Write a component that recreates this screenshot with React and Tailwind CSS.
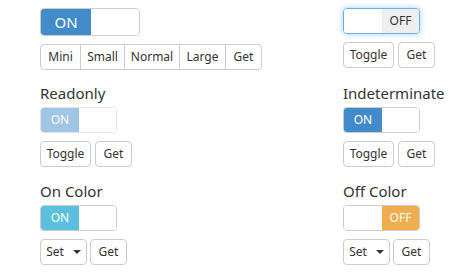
import React from 'react';

const font = { fontFamily: '"Noto Sans", "Open Sans", sans-serif' };

function Btn({ children, className = '' }) {
  return (
    <button className={`h-[26px] border border-[#ccc] rounded-[4px] bg-white text-[12px] text-[#333] flex items-center justify-center ${className}`}>
      {children}
    </button>
  );
}

function Caret() {
  return <span className="inline-block ml-[9px] w-0 h-0 border-l-[4px] border-r-[4px] border-t-[4px] border-l-transparent border-r-transparent border-t-[#333]" />;
}

function Switch({ on, color = 'bg-[#428bca]', offColor = 'bg-[#eee]', className = '' }) {
  return (
    <div className={`w-[77px] h-[26px] border border-[#ccc] rounded-[4px] overflow-hidden flex bg-white ${className}`}>
      {on ? (
        <>
          <div className={`w-[38px] h-full ${color} text-white text-[12px] flex items-center justify-center`}>ON</div>
          <div className="flex-1 h-full bg-white" />
        </>
      ) : (
        <>
          <div className="w-[38px] h-full bg-white" />
          <div className={`flex-1 h-full ${offColor} text-[12px] flex items-center justify-center`}>OFF</div>
        </>
      )}
    </div>
  );
}

function Label({ children }) {
  return <div className="h-[20px] leading-[20px] text-[15px] text-[#333]">{children}</div>;
}

export default function App() {
  return (
    <div className="w-[474px] h-[273px] bg-white overflow-hidden" style={font}>
      <div className="grid grid-cols-[303px_1fr] pl-[40px] pt-[8px]">
        {/* row 1 */}
        <div className="flex flex-col">
          <div className="w-[100px] h-[28px] border border-[#ccc] rounded-[4px] overflow-hidden flex">
            <div className="w-[50px] h-full bg-[#428bca] text-white text-[15px] flex items-center justify-center">ON</div>
            <div className="flex-1 bg-white" />
          </div>
          <div className="mt-[8px] flex">
            <Btn className="w-[41px] rounded-r-none">Mini</Btn>
            <Btn className="w-[45px] -ml-px rounded-none">Small</Btn>
            <Btn className="w-[56px] -ml-px rounded-none">Normal</Btn>
            <Btn className="w-[47px] -ml-px rounded-none">Large</Btn>
            <Btn className="w-[37px] -ml-px rounded-l-none">Get</Btn>
          </div>
        </div>
        <div className="flex flex-col">
          <div className="w-[77px] h-[26px] border border-[#66afe9] rounded-[4px] overflow-hidden flex shadow-[0_0_6px_rgba(102,175,233,0.6)]">
            <div className="w-[38px] h-full bg-white" />
            <div className="flex-1 h-full bg-[#eee] text-[12px] text-[#333] flex items-center justify-center">OFF</div>
          </div>
          <div className="mt-[8px] flex gap-[4px]">
            <Btn className="w-[51px]">Toggle</Btn>
            <Btn className="w-[37px]">Get</Btn>
          </div>
        </div>

        {/* row 2 */}
        <div className="flex flex-col mt-[13px]">
          <Label>Readonly</Label>
          <Switch on className="mt-[4px] opacity-50" />
          <div className="mt-[8px] flex gap-[4px]">
            <Btn className="w-[51px]">Toggle</Btn>
            <Btn className="w-[37px]">Get</Btn>
          </div>
        </div>
        <div className="flex flex-col mt-[13px]">
          <Label>Indeterminate</Label>
          <Switch on className="mt-[4px]" />
          <div className="mt-[8px] flex gap-[4px]">
            <Btn className="w-[51px]">Toggle</Btn>
            <Btn className="w-[37px]">Get</Btn>
          </div>
        </div>

        {/* row 3 */}
        <div className="flex flex-col mt-[14px]">
          <Label>On Color</Label>
          <Switch on color="bg-[#5bc0de]" className="mt-[4px]" />
          <div className="mt-[8px] flex gap-[3px]">
            <Btn className="w-[47px]">Set<Caret /></Btn>
            <Btn className="w-[37px]">Get</Btn>
          </div>
        </div>
        <div className="flex flex-col mt-[14px]">
          <Label>Off Color</Label>
          <div className="mt-[4px] w-[77px] h-[26px] border border-[#ccc] rounded-[4px] overflow-hidden flex">
            <div className="w-[38px] h-full bg-white" />
            <div className="flex-1 h-full bg-[#f0ad4e] text-white text-[12px] flex items-center justify-center">OFF</div>
          </div>
          <div className="mt-[8px] flex gap-[3px]">
            <Btn className="w-[47px]">Set<Caret /></Btn>
            <Btn className="w-[37px]">Get</Btn>
          </div>
        </div>
      </div>
    </div>
  );
}
